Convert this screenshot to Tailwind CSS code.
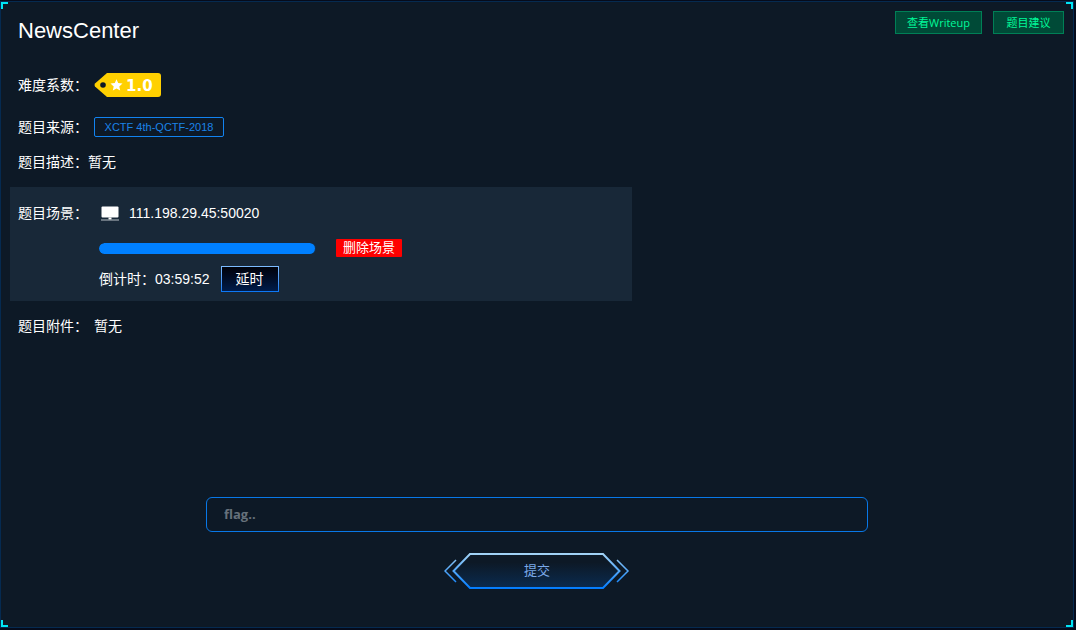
<!DOCTYPE html>
<html lang="zh-CN">
<head>
  <meta charset="UTF-8" />
  <meta name="viewport" content="width=device-width, initial-scale=1" />
  <title>NewsCenter</title>
  <script src="https://cdn.jsdelivr.net/npm/@tailwindcss/browser@4"></script>
</head>
<body class="flex min-h-screen flex-col bg-[#050b1b] pt-px pr-[2px] pb-[2px] font-['Liberation_Sans','Noto_Sans_CJK_SC',sans-serif] text-sm text-white">
  <main class="relative flex grow flex-col border border-[#052a50] bg-[#0d1926]">
    <!-- Corner marks -->
    <span class="absolute top-0 left-0 size-[7px] border-t-2 border-l-2 border-[#00e5f5]"></span>
    <span class="absolute top-0 right-0 size-[7px] border-t-2 border-r-2 border-[#00e5f5]"></span>
    <span class="absolute bottom-0 left-0 size-[7px] border-b-2 border-l-2 border-[#00e5f5]"></span>
    <span class="absolute right-0 bottom-0 size-[7px] border-r-2 border-b-2 border-[#00e5f5]"></span>

    <header class="flex items-start justify-between pt-[9px] pr-[9px] pl-[17px]">
      <h1 class="pt-[5px] text-[22px] leading-[30px]">NewsCenter</h1>
      <div class="flex gap-[11px] font-['Open_Sans','Noto_Sans_CJK_SC',sans-serif]">
        <button type="button" class="h-[23px] w-[87px] border border-[#007f56] bg-[#004a37] text-[11px] leading-5 text-[#00fa9a]">查看Writeup</button>
        <button type="button" class="h-[23px] w-[71px] border border-[#007f56] bg-[#004a37] text-[11px] leading-5 text-[#00fa9a]">题目建议</button>
      </div>
    </header>

    <div class="flex items-center pt-[27px] pl-[17px]">
      <span class="w-[76px]">难度系数：</span>
      <svg class="h-6 w-[68px]" viewBox="0 0 68 24" role="img" aria-label="1.0">
        <path d="M13 0H64Q67 0 67 3V21Q67 24 64 24H13L1 13.5Q0 12 1 10.5Z" fill="#ffd000" />
        <circle cx="9" cy="12" r="2.8" fill="#0d1926" />
        <path d="M22.5 6.3L24.2 10.1L28.5 10.6L25.3 13.4L26.2 17.6L22.5 15.5L18.8 17.6L19.7 13.4L16.5 10.6L20.8 10.1Z" fill="#fff" />
        <text x="32" y="18" fill="#fff" font-family="DejaVu Sans, sans-serif" font-size="15" font-weight="700">1.0</text>
      </svg>
    </div>

    <div class="flex items-center pt-5 pl-[17px]">
      <span class="w-[76px]">题目来源：</span>
      <span class="h-5 w-[130px] rounded-xs border border-[#1283f0] text-center text-[11px] leading-[18px] text-[#1b83e6]">XCTF 4th-QCTF-2018</span>
    </div>

    <p class="pt-[15px] pl-[17px] leading-5">题目描述：暂无</p>

    <section class="mt-[15px] ml-[9px] flex h-[114px] w-[58%] bg-[#182838] pl-2">
      <span class="w-[81px] pt-4 leading-5">题目场景：</span>
      <div class="flex flex-col pt-4">
        <div class="flex h-5 items-center gap-[10px] pl-[2px]">
          <svg class="h-[15px] w-[18px]" viewBox="0 0 18 15" aria-hidden="true">
            <rect x="0.5" y="0.5" width="17" height="11" rx="1" fill="#fff" />
            <path d="M7.500 11.500H10.500V13.500H7.500Z" fill="#fff" />
            <path d="M0 14H18" stroke="#b9c0c6" stroke-width="1" />
          </svg>
          <span>111.198.29.45:50020</span>
        </div>
        <div class="mt-4 flex h-[18px] items-center gap-5">
          <div class="h-[11px] w-[217px] overflow-hidden rounded-full bg-[#123250]">
            <div class="h-full rounded-full bg-[#0080ff]" style="width: 99.5%"></div>
          </div>
          <button type="button" class="h-[18px] w-[66px] rounded-[1px] bg-[#ff0000] text-[13px] leading-4">删除场景</button>
        </div>
        <div class="mt-[9px] flex h-[26px] items-center gap-[11px]">
          <span>倒计时：03:59:52</span>
          <button type="button" class="h-[26px] w-[58px] bg-linear-to-b from-[#7dbcff] to-[#0877f5] p-px">
            <span class="flex h-full items-center justify-center bg-linear-to-b from-[#00030b] to-[#001c4b]">延时</span>
          </button>
        </div>
      </div>
    </section>

    <div class="flex pt-[15px] pl-[17px] leading-5">
      <span class="w-[76px]">题目附件：</span>
      <span>暂无</span>
    </div>

    <form class="mt-auto flex flex-col items-center pb-[38px]" onsubmit="return false">
      <input type="text" name="flag" aria-label="flag" placeholder="flag.." class="h-[35px] w-[662px] max-w-full rounded-md border border-[#0878e8] bg-transparent px-[17px] pb-[2px] font-['Open_Sans',sans-serif] text-[13px] font-bold outline-none placeholder:text-[#66717b]" />
      <button type="submit" class="relative mt-[21px] h-9 w-[186px] text-[13px] text-[#7ba9e8]">
        <svg class="absolute inset-0 size-full" viewBox="0 0 186 36" fill="none" aria-hidden="true">
          <defs>
            <linearGradient id="edge" gradientUnits="userSpaceOnUse" x1="0" y1="0" x2="0" y2="36">
              <stop stop-color="#a5d4f5" />
              <stop offset="1" stop-color="#007bff" />
            </linearGradient>
            <linearGradient id="glow" x1="0" y1="0" x2="0" y2="1">
              <stop offset="0.25" stop-color="#0d1926" />
              <stop offset="1" stop-color="#0a2b50" />
            </linearGradient>
          </defs>
          <path d="M26 1H159L175.500 18L159 35H26L9.500 18Z" fill="url(#glow)" stroke="url(#edge)" stroke-width="2" />
          <path d="M12 7L1 18L12 29M173 7L184 18L173 29" stroke="url(#edge)" stroke-width="1.500" />
        </svg>
        <span class="relative">提交</span>
      </button>
    </form>
  </main>
</body>
</html>
